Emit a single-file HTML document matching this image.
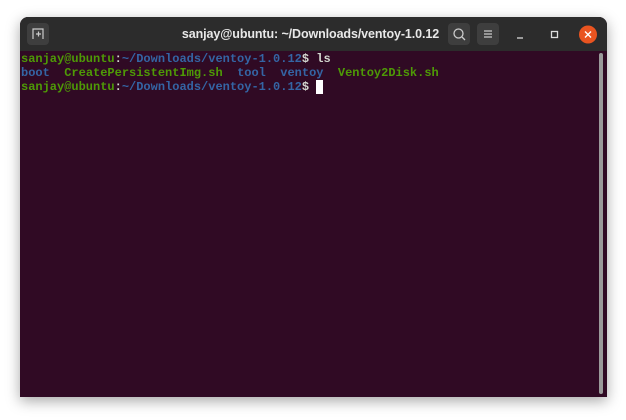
<!DOCTYPE html>
<html><head><style>
body{margin:0;width:626px;height:420px;background:#fff;position:relative;overflow:hidden;font-family:"Liberation Sans",sans-serif}
.win{position:absolute;left:20px;top:17px;width:587px;height:380px;background:#300a24;border-radius:8px 8px 0 0;box-shadow:0 4px 14px rgba(0,0,0,.35);overflow:hidden}
.tb{position:absolute;left:0;top:0;width:587px;height:34px;background:#2c2c2c}
.btn{position:absolute;top:6px;width:22px;height:22px;background:#3e3e3e;border-radius:4px}
.title{position:absolute;left:0;width:587px;top:10px;text-align:center;color:#e8e8e8;font-size:12.5px;font-weight:bold;letter-spacing:-0.1px}
.term{position:absolute;left:1px;top:35px;font-family:"Liberation Mono",monospace;font-size:12px;line-height:14px;font-weight:bold;white-space:pre;color:#ddd}
.g{color:#4e9a06}.b{color:#3465a4}.w{color:#d3d7cf}
.sb{position:absolute;left:579px;top:36px;width:4px;height:341px;background:#9a9a9a;border-radius:2px}
</style></head><body>
<div class="win">
<div class="tb">
<div class="btn" style="left:7px;width:22px"><svg width="22" height="22"><path d="M6 16V6h10v10M9 11h5M11.5 8.5v5" stroke="#ccc" stroke-width="1.2" fill="none"/></svg></div>
<div class="title" style="left:-3px">sanjay@ubuntu: ~/Downloads/ventoy-1.0.12</div>
<div class="btn" style="left:428px"><svg width="22" height="22"><circle cx="10.5" cy="10.5" r="4.5" stroke="#ccc" stroke-width="1.3" fill="none"/><path d="M14 14l3 3" stroke="#ccc" stroke-width="1.3"/></svg></div>
<div class="btn" style="left:457px"><svg width="22" height="22"><path d="M7 8h8M7 11h8M7 14h8" stroke="#ccc" stroke-width="1.2"/></svg></div>
<svg style="position:absolute;left:490px;top:8px" width="90" height="20"><path d="M7 13h6" stroke="#ddd" stroke-width="1.3"/><rect x="41.5" y="6.5" width="6" height="6" stroke="#ddd" stroke-width="1.3" fill="none"/><circle cx="78" cy="9.5" r="9" fill="#e95420"/><path d="M75 6.5l6 6M81 6.5l-6 6" stroke="#fff" stroke-width="1.4"/></svg>
</div>
<div class="term"><span class="g">sanjay@ubuntu</span><span class="w">:</span><span class="b">~/Downloads/ventoy-1.0.12</span><span class="w">$ ls</span>
<span class="b">boot</span>  <span class="g">CreatePersistentImg.sh</span>  <span class="b">tool</span>  <span class="b">ventoy</span>  <span class="g">Ventoy2Disk.sh</span>
<span class="g">sanjay@ubuntu</span><span class="w">:</span><span class="b">~/Downloads/ventoy-1.0.12</span><span class="w">$ </span><span style="background:#fff"> </span></div>
<div class="sb"></div>
</div>
</body></html>
